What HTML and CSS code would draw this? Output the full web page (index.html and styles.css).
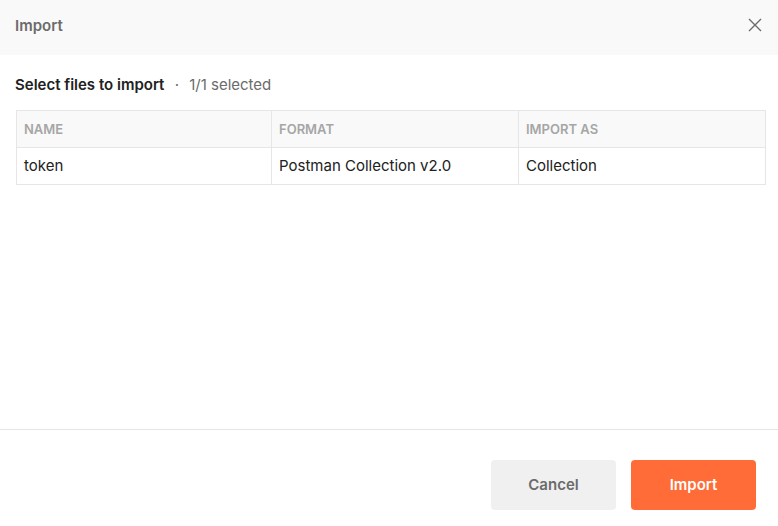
FILE: index.html
```html
<!DOCTYPE html>
<html lang="en">
<head>
  <meta charset="UTF-8" />
  <title>Import</title>
  <link rel="stylesheet" href="styles.css">
</head>
<body>
  <div class="modal">
    <header class="modal-header">
      <span class="modal-title">Import</span>
      <button class="close-btn" aria-label="Close">
        <svg width="14" height="14" viewBox="0 0 14 14">
          <path d="M1 1 L13 13 M13 1 L1 13" stroke="#6b6b6b" stroke-width="1.4" fill="none" />
        </svg>
      </button>
    </header>

    <main class="modal-body">
      <div class="select-info">
        <span class="select-label">Select files to import</span>
        <span class="dot">·</span>
        <span class="select-count">1/1 selected</span>
      </div>

      <table class="files-table">
        <colgroup>
          <col class="col-name">
          <col class="col-format">
          <col class="col-as">
        </colgroup>
        <thead>
          <tr>
            <th>Name</th>
            <th>Format</th>
            <th>Import as</th>
          </tr>
        </thead>
        <tbody>
          <tr>
            <td>token</td>
            <td>Postman Collection v2.0</td>
            <td>Collection</td>
          </tr>
        </tbody>
      </table>
    </main>

    <footer class="modal-footer">
      <button class="btn btn-cancel">Cancel</button>
      <button class="btn btn-import">Import</button>
    </footer>
  </div>
</body>
</html>
```

FILE: styles.css
```css
/* base */
html, body {
  margin: 0;
  height: 100%;
}

body {
  font-family: Inter, "Noto Sans", sans-serif;
  font-size: 15px;
  color: #212121;
  background: #fff;
}

.modal {
  display: flex;
  flex-direction: column;
  height: 100%;
}

/* header */
.modal-header {
  height: 55px;
  flex-shrink: 0;
  display: flex;
  align-items: center;
  justify-content: space-between;
  padding: 0 15px 0 15px;
  background-color: #f9f9f9;
}

.modal-title {
  font-weight: 600;
  color: #6b6b6b;
  margin-top: -5px;
}

.close-btn {
  border: none;
  background: none;
  padding: 0;
  width: 14px;
  height: 14px;
  margin-right: 1px;
  margin-top: -5px;
  cursor: pointer;
  display: flex;
}

/* body */
.modal-body {
  flex: 1;
  padding: 20px 13px 0 16px;
}

.select-info {
  line-height: 20px;
  margin-left: -1px;
}

.select-label {
  font-weight: 600;
  color: #212121;
}

.dot {
  color: #6b6b6b;
  margin: 0 6px 0 6px;
}

.select-count {
  color: #6b6b6b;
}

.files-table {
  width: 749px;
  margin-top: 15px;
  border-collapse: collapse;
  table-layout: fixed;
}

.col-name { width: 255px; }
.col-format { width: 247px; }
.col-as { width: 247px; }

.files-table th,
.files-table td {
  height: 36px;
  padding: 0 7px;
  line-height: 18px;
  border: 1px solid #e6e6e6;
  text-align: left;
  vertical-align: middle;
  white-space: nowrap;
}

.files-table th {
  background-color: #f9f9f9;
  color: #a6a6a6;
  font-size: 13px;
  font-weight: 600;
  text-transform: uppercase;
}

.files-table td {
  color: #212121;
}

/* footer */
.modal-footer {
  height: 97px;
  flex-shrink: 0;
  border-top: 1px solid #e6e6e6;
  box-sizing: border-box;
  display: flex;
  justify-content: flex-end;
  align-items: flex-start;
  gap: 15px;
  padding: 30px 22px 0 0;
}

.btn {
  width: 125px;
  height: 50px;
  border: none;
  border-radius: 4px;
  font-family: inherit;
  font-size: 15px;
  font-weight: 600;
  padding: 0 0 2px;
  cursor: pointer;
}

.btn-cancel {
  background-color: #f0f0f0;
  color: #6b6b6b;
}

.btn-import {
  background-color: #ff6c37;
  color: #fff;
}
```
